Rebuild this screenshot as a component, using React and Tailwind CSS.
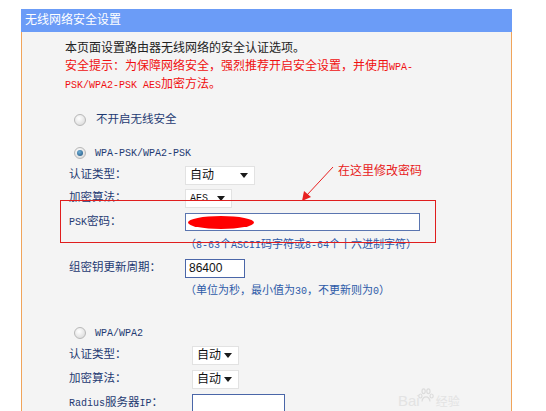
const Tri = () => (
  <svg width="8" height="5" viewBox="0 0 8 5" className="shrink-0">
    <path d="M0 0H8L4 5Z" fill="#1a1a1a" />
  </svg>
);

const M = ({ children }) => (
  <span className="font-['Liberation_Mono',monospace] text-[10px]">{children}</span>
);

const Radio = ({ checked }) => (
  <span className="w-[12px] h-[12px] rounded-full border border-[#b8b8b8] bg-[radial-gradient(circle_at_40%_35%,#ffffff,#d4d4d4)] flex items-center justify-center shrink-0">
    {checked && <span className="w-[6px] h-[6px] rounded-full bg-[radial-gradient(circle_at_40%_35%,#6fb0d8,#1d4f7a)]" />}
  </span>
);

const Select = ({ value, width, mono }) => (
  <div
    className="h-[19px] bg-white border border-[#e2e2e2] flex items-center justify-between pl-[4px] pr-[6px] text-[12px] text-[#111]"
    style={{ width }}
  >
    {mono ? <M>{value}</M> : <span>{value}</span>}
    <Tri />
  </div>
);

const Row = ({ label, labelW, children, className = '' }) => (
  <div className={`flex items-center h-[20px] ml-[47px] ${className}`}>
    <span className="text-[11.5px] text-[#1e3a72] shrink-0" style={{ width: labelW }}>{label}</span>
    {children}
  </div>
);

const App = () => {
  return (
    <div className="relative w-[546px] h-[411px] overflow-hidden bg-white font-['Liberation_Sans','Noto_Sans_CJK_SC',sans-serif]">
      <div className="ml-[21px] mt-[9px] w-[491px]">
        <div className="h-[23px] bg-[#6b9cf7] text-white text-[12px] leading-[23px] pl-[4px]">无线网络安全设置</div>
        <div className="bg-[#f4f4f4] border-x border-[#f0a45a] h-[400px] pt-[8px]">
          <div className="ml-[43px] text-[12px] leading-[17.5px]">
            <p className="text-[#222]">本页面设置路由器无线网络的安全认证选项。</p>
            <p className="text-[#f01010]">安全提示：为保障网络安全，强烈推荐开启安全设置，并使用<M>WPA-</M></p>
            <p className="text-[#f01010]"><M>PSK/WPA2-PSK AES</M>加密方法。</p>
          </div>

          <div className="flex items-center h-[18px] ml-[52px] mt-[16.5px] gap-[10px]">
            <Radio />
            <span className="text-[11.5px] text-[#1e3a72]">不开启无线安全</span>
          </div>

          <div className="flex items-center h-[18px] ml-[52px] mt-[15px] gap-[9px] text-[#1e3a72]">
            <Radio checked />
            <M>WPA-PSK/WPA2-PSK</M>
          </div>

          <Row label="认证类型：" labelW={116} className="mt-[3px]">
            <Select value="自动" width={70} />
          </Row>
          <Row label="加密算法：" labelW={116} className="mt-[3px]">
            <Select value="AES" width={47} mono />
          </Row>
          <Row label={<><M>PSK</M>密码：</>} labelW={116} className="mt-[4px]">
            <div className="relative w-[235px] h-[18px] bg-white border border-[#5a75b0]">
              <div className="absolute left-[2px] top-[2px] w-[66px] h-[13px] rounded-[50%] bg-[#ff0000]" />
            </div>
          </Row>
          <div className="ml-[163px] mt-[4px] h-[16px] text-[11px] leading-[16px] text-[#2d5aa8]">
            （<M>8-63</M>个<M>ASCII</M>码字符或<M>8-64</M>个十六进制字符）
          </div>

          <Row label="组密钥更新周期：" labelW={116} className="mt-[6px]">
            <div className="w-[60px] h-[19px] bg-white border border-[#4a66a8] text-[12px] leading-[17px] pl-[3px] text-[#111]">86400</div>
          </Row>
          <div className="ml-[163px] mt-[4px] h-[16px] text-[11px] leading-[16px] text-[#2d5aa8]">
            （单位为秒，最小值为<M>30</M>，不更新则为<M>0</M>）
          </div>

          <div className="flex items-center h-[18px] ml-[52px] mt-[26px] gap-[9px] text-[#1e3a72]">
            <Radio />
            <M>WPA/WPA2</M>
          </div>
          <Row label="认证类型：" labelW={123} className="mt-[3px]">
            <Select value="自动" width={47} />
          </Row>
          <Row label="加密算法：" labelW={123} className="mt-[4px]">
            <Select value="自动" width={47} />
          </Row>
          <Row label={<><M>Radius</M>服务器<M>IP</M>：</>} labelW={123} className="mt-[4px]">
            <div className="w-[93px] h-[18px] bg-white border border-[#4a66a8]" />
          </Row>
        </div>
      </div>

      {/* annotation */}
      <div className="absolute left-[60px] top-[200px] w-[376px] h-[43px] border border-[#e01e1e]" />
      <svg className="absolute left-0 top-0" width="546" height="411">
        <line x1="333" y1="167" x2="307" y2="195" stroke="#e82020" strokeWidth="1" />
        <path d="M302 201L304 191L311 197Z" fill="#e82020" />
      </svg>
      <span className="absolute left-[338px] top-[161px] text-[12px] leading-[18px] text-[#e82020] font-['Noto_Sans_CJK_SC',sans-serif]">在这里修改密码</span>

      {/* watermark */}
      <div className="absolute left-[398px] top-[388px] flex items-end text-[#e3e3e3] text-[15px] leading-[18px] font-['Liberation_Sans',sans-serif]">
        <span>Bai</span>
        <svg width="18" height="16" viewBox="0 0 22 20" className="-ml-[3px] mb-[6px]">
          <g fill="none" stroke="#dcdcdc" strokeWidth="1.5">
            <ellipse cx="8" cy="4" rx="2" ry="3" />
            <ellipse cx="14" cy="4" rx="2" ry="3" />
            <ellipse cx="4" cy="10" rx="2" ry="2.5" />
            <ellipse cx="18" cy="10" rx="2" ry="2.5" />
            <path d="M6 17c0-4 3-6 5-6s5 2 5 6" />
          </g>
        </svg>
        <span className="text-[12px] leading-[18px] ml-[1px] font-['Noto_Sans_CJK_SC',sans-serif]">经验</span>
      </div>
    </div>
  );
};

export default App;
